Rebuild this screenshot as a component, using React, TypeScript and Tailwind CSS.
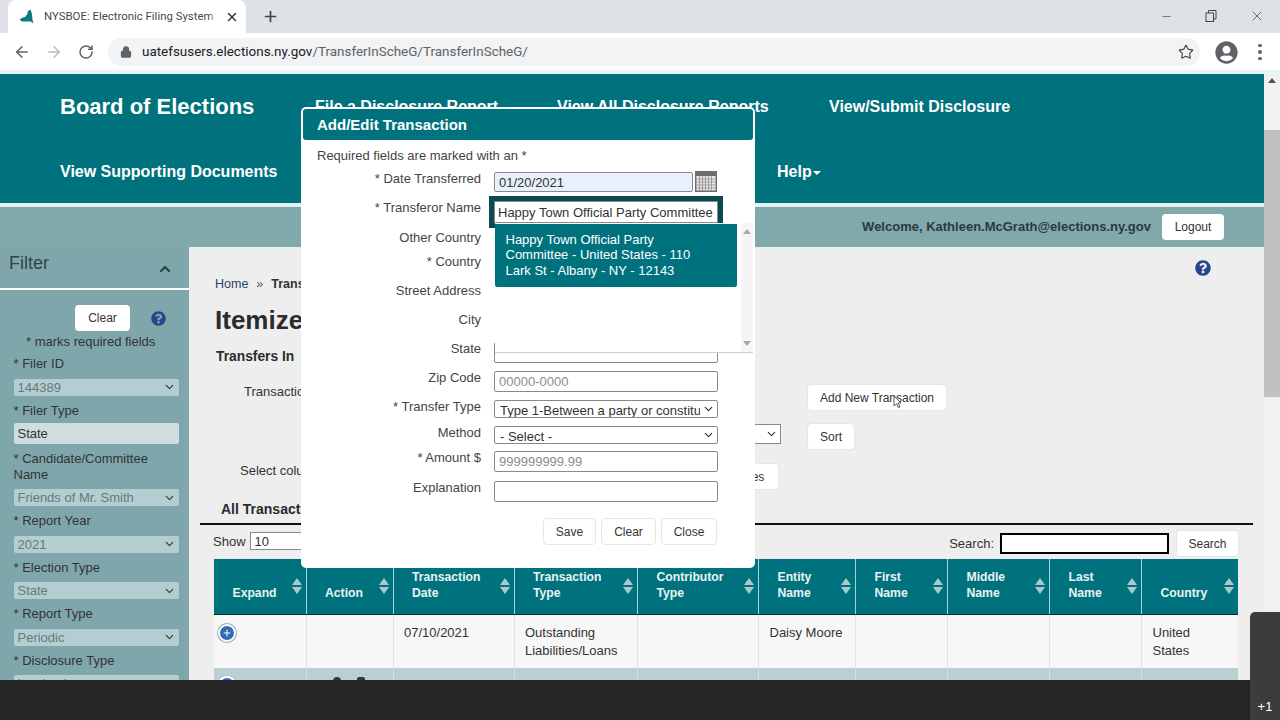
import { ArrowLeft, ArrowRight, RotateCw, Lock, Star, X, Plus, Minus, ChevronUp, ChevronDown } from 'lucide-react'
import { FaQuestionCircle, FaUserCircle } from 'react-icons/fa'

const GRID = 'grid grid-cols-[92.5px_87px_121px_123.5px_121px_97px_92px_102px_92px_96px]'

const COLUMNS = [
  ['Expand'],
  ['Action'],
  ['Transaction', 'Date'],
  ['Transaction', 'Type'],
  ['Contributor', 'Type'],
  ['Entity', 'Name'],
  ['First', 'Name'],
  ['Middle', 'Name'],
  ['Last', 'Name'],
  ['Country'],
]

const FILTERS: { label: string; value: string; input?: boolean }[] = [
  { label: '* Filer ID', value: '144389' },
  { label: '* Filer Type', value: 'State', input: true },
  { label: '* Candidate/Committee Name', value: 'Friends of Mr. Smith' },
  { label: '* Report Year', value: '2021' },
  { label: '* Election Type', value: 'State' },
  { label: '* Report Type', value: 'Periodic' },
  { label: '* Disclosure Type', value: 'Itemized' },
]

const inputCls =
  'w-full h-[21px] bg-white border border-[#8a8a8a] rounded-[2px] px-[4px] text-[13px] text-[#333] placeholder:text-[#8d8d8d] outline-none'
const selectCls =
  'w-full h-[18px] bg-white border border-[#8a8a8a] rounded-[2px] pl-[5px] pr-[17px] text-[13px] text-[#333] outline-none'

function Dropdown({ value, className }: { value: string; className: string }) {
  return (
    <div className="relative">
      <select defaultValue={value} className={'appearance-none block ' + className}>
        <option>{value}</option>
      </select>
      <ChevronDown size={13} strokeWidth={2} className="absolute right-[3px] top-1/2 -translate-y-1/2 text-[#333] pointer-events-none" />
    </div>
  )
}

function Btn({ children, className = '' }: { children: React.ReactNode; className?: string }) {
  return (
    <button className={'h-[27px] bg-white rounded-[4px] border border-[#e6e6e6] text-[12px] text-[#333] ' + className}>
      {children}
    </button>
  )
}

function SortArrows() {
  return (
    <svg width="10" height="16" viewBox="0 0 10 16" className="shrink-0 self-center">
      <path d="M5 0 L10 7 H0 Z M0 9 H10 L5 16 Z" fill="#a7c9cf" />
    </svg>
  )
}

function NyLogo() {
  return (
    <svg width="16" height="16" viewBox="0 0 16 16" className="shrink-0">
      <path
        d="M0.5 10.5 L4 8.5 L6 8 L8 5.5 L9 2 L11.5 0.5 L13 5 L13.5 11 L14.5 14.5 L12.5 13 L11 12.5 L3 12.5 Z"
        fill="#0b7a86"
      />
    </svg>
  )
}

function CalendarIcon() {
  return (
    <svg width="22" height="21" viewBox="0 0 22 21" className="shrink-0 -mt-[1px]">
      <rect x="0" y="0" width="22" height="21" fill="#6d6d6d" />
      <rect x="1.5" y="5" width="19" height="14.5" fill="#e9e9e9" />
      <path
        d="M4.5 5v15M7.5 5v15M10.5 5v15M13.5 5v15M16.5 5v15M2 8h18M2 11h18M2 14h18M2 17h18"
        stroke="#9b9b9b"
        strokeWidth="1"
      />
    </svg>
  )
}

function RestoreIcon() {
  return (
    <svg width="12" height="12" viewBox="0 0 12 12" fill="none" stroke="#444" strokeWidth="1">
      <rect x="1" y="3" width="7.5" height="8.5" />
      <path d="M3.5 3V0.5H11V9H8.5" />
    </svg>
  )
}

function Browser() {
  return (
    <div className="h-[74px] shrink-0 font-['Roboto',sans-serif]">
      <div className="h-[33px] bg-[#dee1e6] flex items-end">
        <div className="ml-[8px] w-[238px] h-[33px] bg-white rounded-t-[8px] flex items-center pl-[11px] pr-[7px] gap-[9px]">
          <NyLogo />
          <span className="relative flex-1 whitespace-nowrap text-[11.4px] text-[#45494d]">
            NYSBOE: Electronic Filing System
            <span className="absolute right-0 top-0 bottom-0 w-[6px] bg-gradient-to-r from-transparent to-white" />
          </span>
          <X size={14} strokeWidth={2.4} className="text-[#333]" />
        </div>
        <Plus size={17} strokeWidth={2.4} className="ml-[16px] mb-[8px] text-[#444]" />
        <div className="ml-auto flex items-center h-[33px] pb-[1px] gap-[32px] pr-[15px]">
          <Minus size={13} strokeWidth={1.2} className="text-[#444]" />
          <RestoreIcon />
          <X size={16} strokeWidth={1.1} className="text-[#444]" />
        </div>
      </div>
      <div className="h-[37px] bg-white flex items-center pt-[1px]">
        <ArrowLeft size={18} strokeWidth={2} className="ml-[13px] text-[#5f6368]" />
        <ArrowRight size={18} strokeWidth={2} className="ml-[14px] text-[#b9bcc0]" />
        <RotateCw size={16} strokeWidth={2.2} className="ml-[15px] text-[#5f6368]" />
        <div className="ml-[14px] w-[1092px] h-[28px] bg-[#f1f3f4] rounded-full flex items-center pl-[12px] pr-[6px]">
          <Lock size={12} strokeWidth={2.6} className="text-[#5f6368] fill-[#5f6368]" />
          <span className="ml-[10px] text-[13.45px] text-[#202124] whitespace-nowrap">
            uatefsusers.elections.ny.gov<span className="text-[#5f6368]">/TransferInScheG/TransferInScheG/</span>
          </span>
          <Star size={16} strokeWidth={1.7} className="ml-auto text-[#444]" />
        </div>
        <FaUserCircle size={23} className="ml-[15px] text-[#5f6368]" />
        <span className="ml-[20px] flex flex-col gap-[3px]">
          <span className="w-[3.5px] h-[3.5px] rounded-full bg-[#5f6368]" />
          <span className="w-[3.5px] h-[3.5px] rounded-full bg-[#5f6368]" />
          <span className="w-[3.5px] h-[3.5px] rounded-full bg-[#5f6368]" />
        </span>
      </div>
      <div className="h-[4px] bg-[#e9f4f6]" />
    </div>
  )
}

function Header() {
  return (
    <header className="h-[129px] shrink-0 bg-[#00727d] text-white font-bold text-[16px] pl-[60px]">
      <div className="h-[65px] flex items-start pt-[20px]">
        <span className="w-[255px] text-[22px] leading-[26px]">Board of Elections</span>
        <span className="w-[242px] leading-[22px] mt-[2px]">File a Disclosure Report</span>
        <span className="w-[272px] leading-[22px] mt-[2px]">View All Disclosure Reports</span>
        <span className="leading-[22px] mt-[2px]">View/Submit Disclosure</span>
      </div>
      <div className="h-[64px] flex items-start pt-[22px]">
        <span className="w-[717px] leading-[22px]">View Supporting Documents</span>
        <span className="leading-[22px] flex items-center">
          Help
          <svg width="8" height="4" viewBox="0 0 8 4" className="ml-[1px] mt-[2px]">
            <path d="M0 0h8L4 4z" fill="#fff" />
          </svg>
        </span>
      </div>
    </header>
  )
}

function Sidebar() {
  return (
    <aside className="w-[189px] shrink-0 bg-[#7fa7ab] text-[#333] text-[13px] leading-[15px] overflow-hidden">
      <div className="h-[43px] border-b-2 border-white flex items-center justify-between pl-[9px] pr-[16px]">
        <span className="text-[18px] text-[#2f4347] mb-[9px]">Filter</span>
        <ChevronUp size={16} strokeWidth={3.2} className="text-[#2f4347] mt-[2px]" />
      </div>
      <div className="mt-[15px] flex items-center pl-[75px]">
        <button className="w-[55px] h-[26px] bg-white rounded-[4px] text-[12px] text-[#333]">Clear</button>
        <FaQuestionCircle size={15} className="ml-[21px] text-[#27458f]" />
      </div>
      <p className="mt-[3px] pl-[26px] leading-[15px]">* marks required fields</p>
      <div className="pl-[13.5px] pr-[10px]">
        {FILTERS.map((f) => (
          <div key={f.label} className="mt-[7px]">
            <label className="block leading-[15.5px]">{f.label}</label>
            {f.input ? (
              <input
                readOnly
                value={f.value}
                className="mt-[5px] w-full h-[21px] bg-[#cfdde0] rounded-[2px] px-[4px] text-[13px] text-[#333] outline-none"
              />
            ) : (
              <div className="mt-[7px]">
                <Dropdown
                  value={f.value}
                  className="w-full h-[17px] bg-[#b4cdd0] rounded-[2px] pl-[4px] text-[13px] text-[#66797c] outline-none"
                />
              </div>
            )}
          </div>
        ))}
      </div>
    </aside>
  )
}

function TransactionTable() {
  return (
    <div className="ml-[25px] mt-[2px] w-[1024px]">
      <div className={GRID + ' h-[55.5px] bg-[#00727d] border-b border-[#0b2b30]'}>
        {COLUMNS.map((c) => (
          <div key={c.join()} className="flex justify-between pl-[18.5px] pr-[4px] border-r border-[#a7d3d8] last:border-r-0">
            <span className="self-end pb-[13px] text-[12.2px] leading-[16px] font-bold text-[#e8f3f4]">
              {c.map((t) => (
                <span key={t} className="block">{t}</span>
              ))}
            </span>
            <SortArrows />
          </div>
        ))}
      </div>
      <div className={GRID + ' h-[53.5px] bg-[#f7f7f7] text-[13px] leading-[18px] text-[#333]'}>
        {COLUMNS.map((c, i) => (
          <div key={c.join()} className="border-r border-[#e2e2e2] last:border-r-0 pt-[9px] pl-[10.5px]">
            {i === 0 && (
              <span className="ml-[-7px] flex w-[18px] h-[18px] items-center justify-center rounded-full bg-[#2f6db3] border-2 border-white ring-1 ring-[#9aa7b0] text-white">
                <Plus size={10} strokeWidth={2.5} />
              </span>
            )}
            {i === 2 && '07/10/2021'}
            {i === 3 && (
              <>
                Outstanding
                <br />
                Liabilities/Loans
              </>
            )}
            {i === 5 && 'Daisy Moore'}
            {i === 9 && (
              <>
                United
                <br />
                States
              </>
            )}
          </div>
        ))}
      </div>
      <div className={GRID + ' h-[30px] bg-[#b8d0d3]'}>
        {COLUMNS.map((c, i) => (
          <div key={c.join()} className="border-r border-[#cfdfe1] last:border-r-0 pt-[8px] pl-[4px]">
            {i === 0 && <span className="block w-[18px] h-[18px] rounded-full bg-[#2f6db3] border-2 border-white" />}
            {i === 1 && (
              <span className="flex gap-[16px] pl-[22px] pt-[1px]">
                <span className="block w-[8px] h-[12px] bg-[#2c3b3e] rounded-t-full" />
                <span className="block w-[8px] h-[12px] bg-[#2c3b3e] rounded-t-[2px]" />
              </span>
            )}
          </div>
        ))}
      </div>
    </div>
  )
}

function Main() {
  return (
    <main className="flex-1 min-w-0 bg-[#eeeeee] text-[13px] text-[#333] overflow-hidden">
      <div className="h-[45px] flex justify-between pl-[26px] pr-[53px]">
        <p className="self-end leading-[15px] text-[12.5px]">
          <span className="text-[#2a3f6b]">Home</span>
          <span className="mx-[8px] text-[#555]">»</span>
          <b>Transfers In</b>
        </p>
        <FaQuestionCircle size={16} className="mt-[13px] text-[#27458f]" />
      </div>
      <h1 className="mt-[12px] pl-[26px] h-[32px] text-[26px] leading-[32px] font-bold text-[#2b2b2b]">
        Itemized Transfers In
      </h1>
      <p className="mt-[11px] pl-[27px] h-[20px] leading-[20px] text-[13.8px] font-bold text-[#2b2b2b]">Transfers In</p>
      <div className="mt-[17px] h-[27px] flex">
        <span className="w-[618px] pl-[55px] leading-[15px]">Transactions</span>
        <Btn className="w-[140px]">Add New Transaction</Btn>
      </div>
      <div className="mt-[12px] h-[27px] flex">
        <div className="w-[618px] pr-[26px] flex justify-end pt-[1px]">
          <div className="w-[300px]">
            <Dropdown value="" className="w-full h-[20px] bg-white border border-[#8a8a8a] outline-none" />
          </div>
        </div>
        <Btn className="w-[48px]">Sort</Btn>
      </div>
      <div className="mt-[13px] h-[27px] flex">
        <span className="w-[590px] pl-[51px] flex justify-between">
          <span className="leading-[15px]">Select columns</span>
          <Btn className="w-[94px]">Preferences</Btn>
        </span>
      </div>
      <p className="mt-[7px] h-[26px] pl-[32px] leading-[24px] text-[14px] font-bold text-[#2b2b2b]">All Transactions</p>
      <div className="ml-[11px] w-[1053px] h-[2px] bg-[#111]" />
      <div className="mt-[5px] h-[27px] flex items-center pl-[24px] pr-[25px]">
        <span className="mb-[4px]">Show</span>
        <select className="mb-[5px] ml-[4px] w-[100px] h-[18px] bg-white border border-[#8a8a8a] outline-none">
          <option>10</option>
        </select>
        <span className="ml-auto mr-[6px]">Search:</span>
        <input className="w-[169px] h-[21px] bg-white border-2 border-black outline-none" />
        <Btn className="ml-[7px] w-[63px]">Search</Btn>
      </div>
      <TransactionTable />
    </main>
  )
}

function TransactionModal() {
  const rows: { label: string; h: string; field?: React.ReactNode }[] = [
    {
      label: '* Date Transferred',
      h: 'h-[29px]',
      field: (
        <div className="flex gap-[2px]">
          <input
            readOnly
            value="01/20/2021"
            className="w-[199px] h-[20px] bg-[#e8f0fe] border border-[#8a8a8a] rounded-[2px] px-[4px] text-[13px] text-[#333] outline-none"
          />
          <CalendarIcon />
        </div>
      ),
    },
    {
      label: '* Transferor Name',
      h: 'h-[30px]',
      field: (
        <input
          readOnly
          value="Happy Town Official Party Committee"
          className="w-full h-[22px] bg-white border border-[#8a8a8a] px-[3px] text-[13px] text-[#333] outline-[5px] outline-solid outline-[#0b4a52]"
        />
      ),
    },
    { label: 'Other Country', h: 'h-[24px]' },
    { label: '* Country', h: 'h-[29px]' },
    { label: 'Street Address', h: 'h-[29px]' },
    { label: 'City', h: 'h-[29px]' },
    { label: 'State', h: 'h-[29px]', field: <input className={inputCls} /> },
    { label: 'Zip Code', h: 'h-[29px]', field: <input placeholder="00000-0000" className={inputCls} /> },
    {
      label: '* Transfer Type',
      h: 'h-[26px]',
      field: <Dropdown value="Type 1-Between a party or constituted committee" className={selectCls} />,
    },
    {
      label: 'Method',
      h: 'h-[25px]',
      field: <Dropdown value="- Select -" className={selectCls} />,
    },
    { label: '* Amount $', h: 'h-[30px]', field: <input placeholder="999999999.99" className={inputCls} /> },
    { label: 'Explanation', h: 'h-[37px]', field: <input className={inputCls} /> },
  ]

  return (
    <div className="absolute left-[301px] top-[107px] w-[454px] h-[461px] bg-white rounded-[5px] text-[13px] text-[#444] p-[2px]">
      <div className="h-[31px] bg-[#00727d] rounded-[3px] pl-[14px] text-[15px] leading-[31px] font-bold text-white">
        Add/Edit Transaction
      </div>
      <p className="mt-[8px] pl-[14px] leading-[15px]">Required fields are marked with an *</p>
      <div className="mt-[9px]">
        {rows.map((r) => (
          <div key={r.label} className={'flex ' + r.h}>
            <label className="w-[178px] -mt-[1px] text-right leading-[15px] shrink-0">{r.label}</label>
            <div className="ml-[13px] w-[224px]">{r.field}</div>
          </div>
        ))}
      </div>
      <div className="flex justify-end gap-[5px] pr-[36px]">
        <Btn className="w-[53px]">Save</Btn>
        <Btn className="w-[55px]">Clear</Btn>
        <Btn className="w-[56px]">Close</Btn>
      </div>
      <div className="absolute left-[193.5px] top-[116px] w-[258px] h-[130px] bg-white border-b border-[#cfcfcf] flex">
        <div className="w-[242px] h-[63px] bg-[#00727d] rounded-b-[2px] mt-[1px] pl-[11px] pr-[44px] pt-[8px] text-white leading-[15.4px]">
          Happy Town Official Party Committee - United States - 110 Lark St - Albany - NY - 12143
        </div>
        <div className="ml-auto w-[12px] bg-[#f5f5f5] flex flex-col items-center justify-between py-[6px]">
          <svg width="8" height="5" viewBox="0 0 8 5">
            <path d="M4 0l4 5H0z" fill="#a9a9a9" />
          </svg>
          <svg width="8" height="5" viewBox="0 0 8 5">
            <path d="M0 0h8L4 5z" fill="#a9a9a9" />
          </svg>
        </div>
      </div>
    </div>
  )
}

export default function App() {
  return (
    <div className="relative w-[1280px] h-[720px] overflow-hidden bg-[#252525] font-['Liberation_Sans',sans-serif]">
      <Browser />
      <div className="h-[606px] flex overflow-hidden">
        <div className="w-[1264px] flex flex-col shrink-0">
          <Header />
          <div className="h-[4px] shrink-0 bg-[#e4f1f2]" />
          <div className="h-[40px] shrink-0 bg-[#81a8ab] flex items-center justify-end pr-[40px]">
            <span className="text-[13px] font-bold text-[#2b3a3c] mr-[11px] whitespace-nowrap">
              Welcome, Kathleen.McGrath@elections.ny.gov
            </span>
            <button className="w-[62px] h-[26px] bg-white rounded-[4px] text-[12px] text-[#333]">Logout</button>
          </div>
          <div className="flex flex-1 min-h-0">
            <Sidebar />
            <Main />
          </div>
        </div>
        <div className="w-[16px] bg-[#f1f1f1] flex flex-col items-center pt-[4px]">
          <svg width="8" height="5" viewBox="0 0 8 5">
            <path d="M4 0l4 5H0z" fill="#505050" />
          </svg>
          <div className="mt-[47px] w-full h-[267px] bg-[#c1c1c1]" />
        </div>
      </div>
      <TransactionModal />
      <svg width="10" height="14" viewBox="0 0 10 14" className="absolute left-[893px] top-[395px]">
        <path d="M1 1v10l2.5-2.3 2 4 1.5-.8-2-3.9H8z" fill="#fff" stroke="#333" strokeWidth="0.8" />
      </svg>
      <div className="absolute left-[1250px] top-[612px] w-[30px] h-[108px] bg-[#3c3c3c] rounded-tl-[5px] flex items-end justify-center pb-[4px] text-[13px] text-white">
        +1
      </div>
    </div>
  )
}
